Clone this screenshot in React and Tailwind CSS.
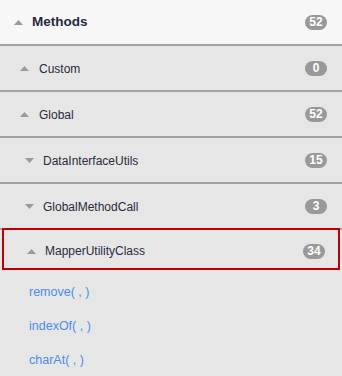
import React from "react";

const rows = [
  { name: "Custom", count: 0, open: true, depth: 1 },
  { name: "Global", count: 52, open: true, depth: 1 },
  { name: "DataInterfaceUtils", count: 15, open: false, depth: 2 },
  { name: "GlobalMethodCall", count: 3, open: false, depth: 2 },
];

const methods = ["remove( , )", "indexOf( , )", "charAt( , )"];

function Caret({ open }) {
  return (
    <svg width="9" height="5" viewBox="0 0 9 5" className="shrink-0">
      {open ? <path d="M0 5 L4.5 0 L9 5 Z" fill="#9a9a9a" /> : <path d="M0 0 L4.5 5 L9 0 Z" fill="#9a9a9a" />}
    </svg>
  );
}

function Badge({ n }) {
  return (
    <span className="ml-auto w-[22px] h-[15px] rounded-full bg-[#999] text-white text-[12px] leading-[15px] font-bold text-center">
      {n}
    </span>
  );
}

export default function App() {
  return (
    <div className="w-[342px] h-[376px] bg-[#e6e6e6] text-[#2b2b3b] overflow-hidden font-['Liberation_Sans',Arial,sans-serif]">
      <div className="h-[44px] bg-[#f7f7f7] flex items-center pl-[14px] pr-[15px]">
        <Caret open />
        <span className="ml-[9px] text-[13.5px] font-bold text-[#1f2a44]">Methods</span>
        <Badge n={52} />
      </div>
      <div className="h-[2px] bg-[#a3a3a3]" />
      {rows.map(r => (
        <div key={r.name}>
          <div className={"h-[44px] flex items-center pr-[15px] " + (r.depth === 1 ? "pl-[20px]" : "pl-[25px]")}>
            <Caret open={r.open} />
            <span className={"text-[12px] pt-[1px] " + (r.depth === 1 ? "ml-[10px]" : "ml-[9px]")}>{r.name}</span>
            <Badge n={r.count} />
          </div>
          <div className="h-[2px] bg-[#a3a3a3]" />
        </div>
      ))}
      <div className="mx-[2px] h-[42px] border-2 border-[#c00000] flex items-center pt-[4px] pl-[23px] pr-[13px] -mt-[2px]">
        <Caret open />
        <span className="ml-[9px] text-[12px]">MapperUtilityClass</span>
        <Badge n={34} />
      </div>
      <div className="pl-[29px] pt-[5px] flex flex-col">
        {methods.map(m => (
          <a key={m} className="h-[34px] leading-[34px] text-[12.5px] text-[#4a8ee6]">{m}</a>
        ))}
      </div>
    </div>
  );
}
